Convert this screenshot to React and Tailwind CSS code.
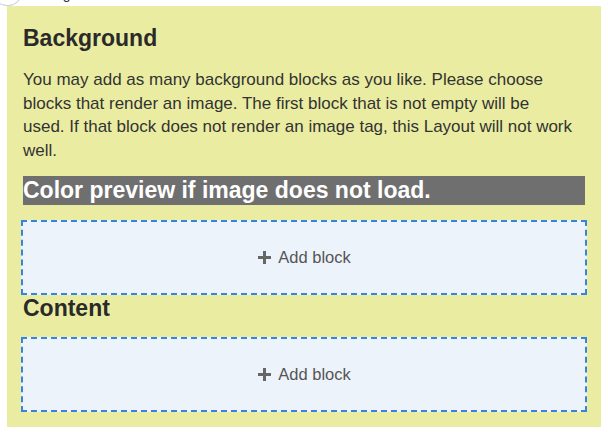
function AddBlock() {
  return (
    <div className="-mx-[2px] h-[75px] border-2 border-dashed border-[#3584e4] bg-[#edf3fb] flex items-center justify-center">
      <button className="flex items-center gap-[6px] text-[16.5px] text-[#555555]">
        <svg width="15" height="15" viewBox="0 0 15 15" className="text-[#666666]">
          <path d="M7.5 1v13M1 7.5h13" stroke="currentColor" strokeWidth="3" />
        </svg>
        <span>Add block</span>
      </button>
    </div>
  )
}

export default function App() {
  return (
    <div className="min-h-screen bg-white text-[#333333]" style={{ fontFamily: '"Liberation Sans", Arial, sans-serif' }}>
      {/* bits of the row above, cut off by the top of the window */}
      <div className="relative h-[6px] overflow-hidden">
        <div className="absolute -top-[21px] -left-[7px] w-[29px] h-[27px] rounded-full border border-[#c8c8c8] bg-white"></div>
        <span className="absolute -top-[14px] left-[30px] text-[14px] leading-[17px] text-[#333333]">Configure</span>
      </div>

      <div className="ml-[7px] w-[594px] bg-[#eaeda1] px-4 pt-[19px] pb-[15px]">
        <h2 className="text-[23px] leading-[26px] font-bold text-[#2a2a2a]">Background</h2>

        <p className="mt-[17px] text-[17px] leading-[23.5px] text-[#333333]">
          You may add as many background blocks as you like. Please choose
          <br />
          blocks that render an image. The first block that is not empty will be
          <br />
          used. If that block does not render an image tag, this Layout will not work
          <br />
          well.
        </p>

        <h2 className="mt-[14px] bg-[#6f6f6f] text-white text-[23px] leading-[29px] font-bold">
          Color preview if image does not load.
        </h2>

        <div className="mt-[15px]">
          <AddBlock />
        </div>

        <h2 className="text-[23px] leading-[26px] font-bold text-[#2a2a2a]">Content</h2>

        <div className="mt-4">
          <AddBlock />
        </div>
      </div>
    </div>
  )
}
